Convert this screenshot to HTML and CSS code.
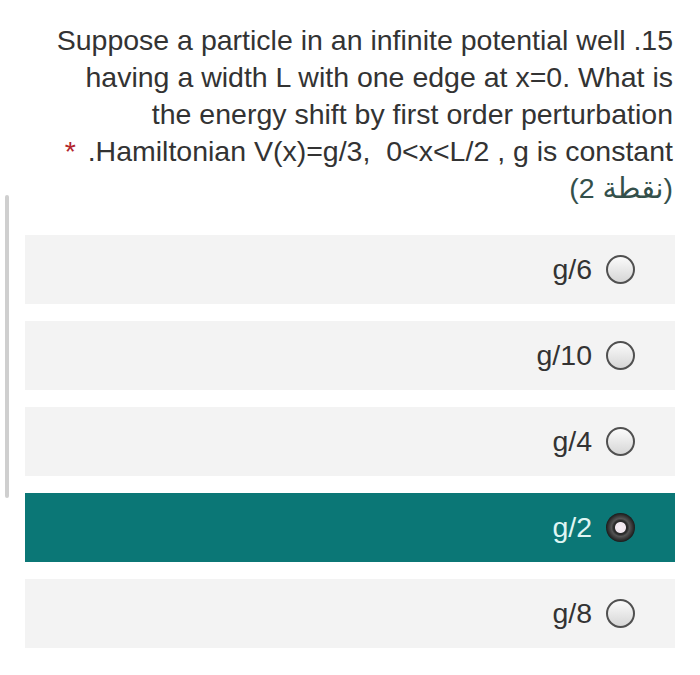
FILE: index.html
```html
<!DOCTYPE html>
<html>
<head>
<meta charset="utf-8">
<link rel="stylesheet" href="styles.css">
</head>
<body>
<div class="scrollbar"></div>
<main class="page">
  <div class="question">
    <div class="line">Suppose a particle in an infinite potential well .15</div>
    <div class="line">having a width L with one edge at x=0. What is</div>
    <div class="line">the energy shift by first order perturbation</div>
    <div class="line"><span class="req">*</span> .Hamiltonian V(x)=g/3,&nbsp; 0&lt;x&lt;L/2 , g is constant</div>
    <div class="line points">(2 نقطة)</div>
  </div>
  <div class="options">
    <div class="option"><span class="label">g/6</span><span class="radio"></span></div>
    <div class="option"><span class="label">g/10</span><span class="radio"></span></div>
    <div class="option"><span class="label">g/4</span><span class="radio"></span></div>
    <div class="option selected"><span class="label">g/2</span><span class="radio"></span></div>
    <div class="option"><span class="label">g/8</span><span class="radio"></span></div>
  </div>
</main>
</body>
</html>
```
FILE: styles.css
```css
html, body {
  margin: 0;
  padding: 0;
  background: #ffffff;
}

body {
  font-family: "Liberation Sans", "DejaVu Sans", Arial, sans-serif;
  color: #333333;
}

.scrollbar {
  position: fixed;
  left: 5px;
  top: 195px;
  width: 4px;
  height: 303px;
  border-radius: 2px;
  background: #cfcfcf;
}

.page {
  padding: 22px 25px 0 25px;
}

.question {
  text-align: right;
  font-size: 28.5px;
  line-height: 37px;
  padding-right: 2px;
  margin-bottom: 28px;
}

.req {
  color: #b3262c;
  margin-right: 4px;
}

.points {
  color: #34504b;
}

.options {
  display: flex;
  flex-direction: column;
  gap: 17px;
}

.option {
  height: 69px;
  background: #f3f3f3;
  display: flex;
  align-items: center;
  justify-content: flex-end;
  gap: 14px;
  padding-right: 40px;
  font-size: 28.5px;
}

.option.selected {
  background: #0b7776;
  color: #dff5f3;
}

.radio {
  width: 25px;
  height: 25px;
  border-radius: 50%;
  border: 2px solid #505050;
  background: linear-gradient(#fbfbfb, #d6d6d6);
  flex: none;
}

.selected .radio {
  width: 29px;
  height: 29px;
  border: none;
  background: radial-gradient(circle at 50% 50%, #f6eef4 0, #f0e6ee 5px, #2a2a2a 6px, #2a2a2a 7px, #555 9px, #1a1a1a 14.5px);
}
```
